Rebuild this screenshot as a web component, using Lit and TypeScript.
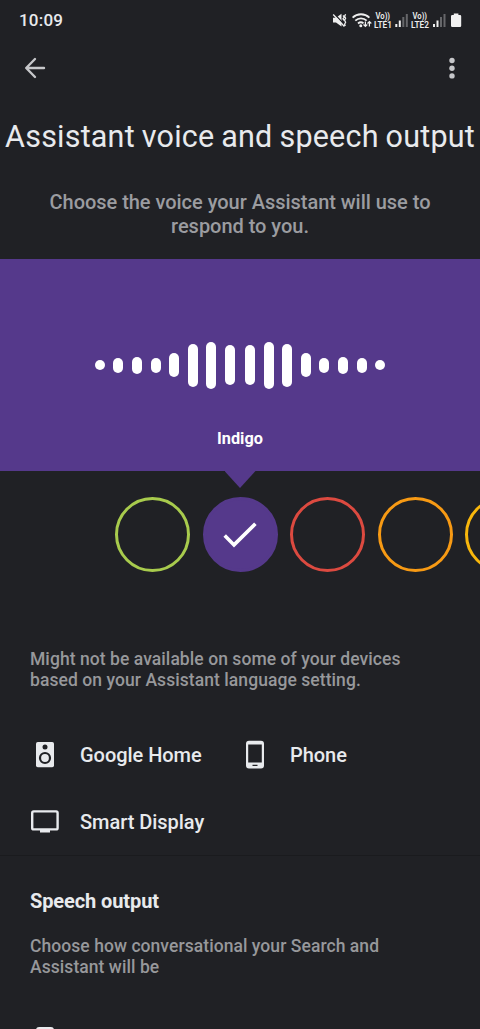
import { LitElement, html, css, svg } from "lit";
import { customElement, state } from "lit/decorators.js";

const BARS = [10, 15, 17, 15, 24, 43, 47, 40];
const VOICES = ["lime", "indigo", "red", "orange", "amber"];

@customElement("app-root")
export class AppRoot extends LitElement {
  @state() selected = "indigo";

  static styles = css`
    :host { display: block; width: 480px; height: 1029px; overflow: hidden; background: #202125; color: #e8eaed; font-family: Roboto, sans-serif; }
    * { box-sizing: border-box; }
    svg { display: block; }
    h1, h2, p { margin: 0; white-space: nowrap; }
    .status { height: 40px; padding: 0 18px 0 19px; display: flex; justify-content: space-between; align-items: center; }
    .clock { font-size: 17px; font-weight: 500; letter-spacing: 0.2px; }
    .toolbar { height: 56px; padding: 0 13px 0 20px; display: flex; justify-content: space-between; align-items: center; color: #c6c7ca; }
    h1 { height: 80px; line-height: 81px; font-size: 30.5px; font-weight: 400; letter-spacing: 0.2px; word-spacing: -0.8px; text-align: center; }
    .sub { margin-top: 14px; height: 69px; font-size: 20px; line-height: 24px; letter-spacing: -0.03px; color: #9b9ca0; text-align: center; font-weight: 500; }
    .hero { height: 212px; background: #55398b; display: flex; flex-direction: column; align-items: center; }
    .wave { margin-top: 82px; height: 48px; display: flex; gap: 10px; }
    .half { display: flex; align-items: center; gap: 8.6px; }
    .half.mirrored { flex-direction: row-reverse; }
    .bar { width: 10px; border-radius: 5px; background: #fff; }
    .name { margin-top: 38px; line-height: 24px; font-size: 16.3px; font-weight: 700; color: #fff; }
    .pointer { display: block; width: 31px; height: 17px; margin: 0 auto; background: #55398b; clip-path: polygon(0 0, 100% 0, 50% 100%); }
    .voices { display: flex; gap: 12.6px; padding: 9px 0 0 115px; height: 84px; overflow: hidden; }
    .voice { flex: none; width: 75px; height: 75px; padding: 0; border-radius: 50%; border: 3.4px solid; background: transparent; display: grid; place-items: center; }
    .lime { border-color: #a8cb4d; } .indigo { border-color: #55398b; background: #55398b; }
    .red { border-color: #dc4a40; } .orange { border-color: #f79a14; } .amber { border-color: #f8b70c; }
    .note { margin: 77px 0 0 30px; font-size: 17.5px; line-height: 20.6px; letter-spacing: 0.065px; color: #97989b; font-weight: 500; }
    .devices { display: grid; grid-template-columns: 210px 1fr; grid-auto-rows: 67px; padding-left: 30px; margin-top: 31px; height: 134px; }
    .device { display: flex; align-items: center; gap: 20px; font-size: 20px; letter-spacing: -0.04px; font-weight: 500; }
    .device span { padding-top: 1px; }
    .speech { border-top: 1px solid #1a1b1e; padding: 33px 30px 0; }
    h2 { font-size: 20px; line-height: 24px; letter-spacing: -0.1px; font-weight: 700; }
    .desc { margin-top: 23px; font-size: 17.5px; line-height: 20.6px; letter-spacing: 0.06px; color: #97989b; font-weight: 500; }
    .next { margin: 50px 0 0 6px; width: 18px; height: 28px; border: 3px solid #e8eaed; border-radius: 3px; }
  `;

  statusIcons() {
    const signal = (x: number) => svg`
      <rect x=${x} y="24" width="2" height="3" fill="#eee"/><rect x=${x + 3.5} y="20.5" width="2" height="6.5" fill="#eee"/>
      <rect x=${x + 7} y="17" width="2" height="10" fill="#66676a"/><rect x=${x + 10.5} y="14" width="2" height="13" fill="#66676a"/>`;
    const lte = (x: number, n: string) => svg`
      <text x=${x + 1.5} y="19.3" font-size="8.5" font-weight="600" textLength="14.500" lengthAdjust="spacingAndGlyphs" fill="#eee">Vo))</text>
      <text x=${x} y="27.500" font-size="9" font-weight="600" textLength="18" lengthAdjust="spacingAndGlyphs" fill="#eee">${n}</text>`;
    return html`<svg width="130" height="40" viewBox="332 0 130 40">
      <path d="M333 17.800h3l5.500-4.100v12.800L336 22.500h-3z" fill="#eee"/>
      <path d="M333.800 13.300l12 13" stroke="#202125" stroke-width="1.300"/>
      <path d="M333.200 14.500l11.200 12M343 15.500l1.300 1.600-1.300 1.700 1 1.500M345.600 14.200l-1 2 1 2-1 2 1 2-1 2 .7 1.800" fill="none" stroke="#eee" stroke-width="1.300"/>
      <g fill="none" stroke="#eee" stroke-width="1.800"><path d="M352.600 17.600a12.200 12.200 0 0 1 16.800 0M355.300 20.600a8.300 8.300 0 0 1 11.400 0M358 23.500a4.500 4.500 0 0 1 5.500-.3"/></g>
      <circle cx="360.800" cy="25.800" r="1.500" fill="#eee"/>
      <path d="M365.400 21.500v5m-1.900-2l1.900 2 1.900-2M369.400 26.500v-5m-1.900 2l1.900-2 1.900 2" fill="none" stroke="#eee" stroke-width="1.200"/>
      ${lte(374, "LTE1")}${signal(395.3)}${lte(411, "LTE2")}${signal(433)}
      <path d="M453.800 13.500h4.600v1.500h1.600q1.200 0 1.200 1.200v9.600q0 1.200-1.200 1.200h-7.800q-1.200 0-1.200-1.200v-9.600q0-1.200 1.200-1.200h1.600z" fill="#f1f1f1"/>
    </svg>`;
  }

  render() {
    const bars = BARS.map((h) => html`<span class="bar" style="height:${h}px"></span>`);
    return html`
      <div class="status"><span class="clock">10:09</span>${this.statusIcons()}</div>
      <div class="toolbar">
        <svg width="30" height="30" viewBox="0 0 30 30" fill="none" stroke="currentColor" stroke-width="2.400" stroke-linecap="round" stroke-linejoin="round"><path d="M24 15H6.500M15 6L6.200 15l8.800 9"/></svg>
        <svg width="30" height="30" viewBox="0 0 30 30" fill="currentColor"><circle cx="15" cy="7.500" r="2.700"/><circle cx="15" cy="15.200" r="2.700"/><circle cx="15" cy="22.900" r="2.700"/></svg>
      </div>
      <h1>Assistant voice and speech output</h1>
      <p class="sub">Choose the voice your Assistant will use to<br>respond to you.</p>
      <section class="hero">
        <div class="wave"><div class="half">${bars}</div><div class="half mirrored">${bars}</div></div>
        <div class="name">Indigo</div>
      </section>
      <span class="pointer"></span>
      <div class="voices">${VOICES.map((v) => html`<button class="voice ${v}" aria-label=${v} @click=${() => (this.selected = v)}>
        ${v === this.selected ? html`<svg width="40" height="40" viewBox="0 0 40 40" fill="none" stroke="#fff" stroke-width="3.600"><path d="M4.700 20.600l9.300 9.300L35.400 8.800"/></svg>` : ""}</button>`)}</div>
      <p class="note">Might not be available on some of your devices<br>based on your Assistant language setting.</p>
      <div class="devices">
        <div class="device"><svg width="30" height="30" viewBox="0 0 30 30"><rect x="6" y="2" width="18" height="25.300" rx="1.800" fill="#e8eaed"/><circle cx="15" cy="7" r="2.500" fill="#202125"/><circle cx="15" cy="18" r="5" fill="#e8eaed" stroke="#202125" stroke-width="2.200"/></svg><span>Google Home</span></div>
        <div class="device"><svg width="30" height="30" viewBox="0 0 30 30"><path fill-rule="evenodd" fill="#e8eaed" d="M9 .8h12q3 0 3 3v21.800q0 3-3 3H9q-3 0-3-3V3.800q0-3 3-3zM8.200 4.600v18h13.600v-18zM12.500 24.700v1.400h5v-1.400z"/></svg><span>Phone</span></div>
        <div class="device"><svg width="30" height="30" viewBox="0 0 30 30"><rect x="2.200" y="4.400" width="25.400" height="18" rx="1.500" fill="none" stroke="#e8eaed" stroke-width="2.400"/><path d="M10 22.500h10v3H10z" fill="#e8eaed"/></svg><span>Smart Display</span></div>
      </div>
      <section class="speech">
        <h2>Speech output</h2>
        <p class="desc">Choose how conversational your Search and<br>Assistant will be</p>
        <div class="next"></div>
      </section>
    `;
  }
}
